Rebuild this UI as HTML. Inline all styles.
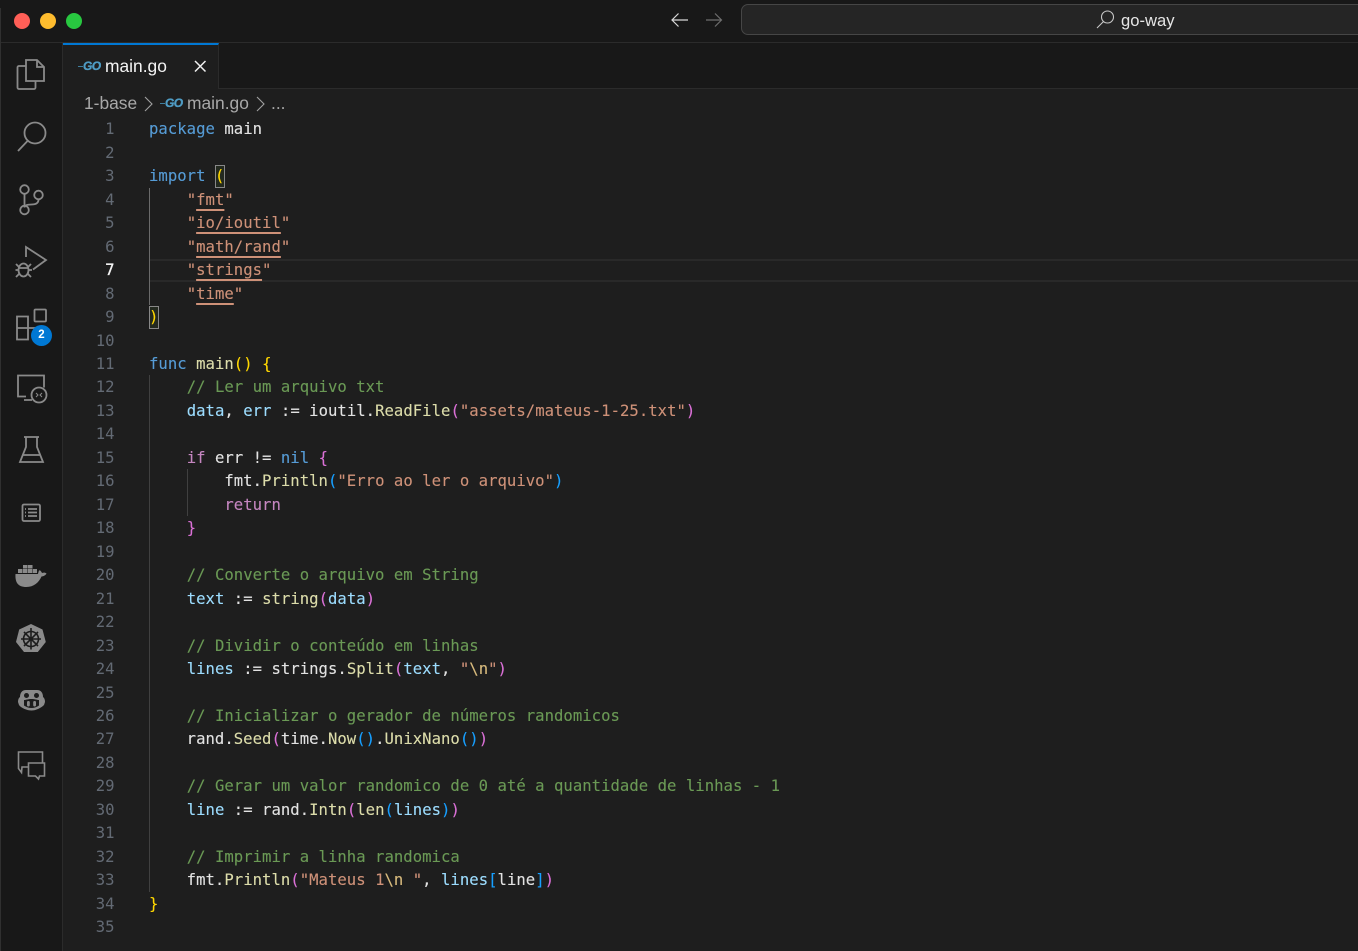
<!DOCTYPE html>
<html><head><meta charset="utf-8"><style>
html,body{margin:0;padding:0;background:#1e1e1e}
#r{position:relative;width:1358px;height:951px;overflow:hidden;background:#1e1e1e;font-family:"Liberation Sans",sans-serif}
.a{position:absolute}
#code,#nums{position:absolute;top:118.3px;margin:0;font:15.6px/23.47px "DejaVu Sans Mono","Liberation Mono",monospace;white-space:pre;color:#e2e2e2}
#code{left:149px;letter-spacing:.03px;-webkit-text-stroke:.12px}
#nums{left:76px;width:38.5px;text-align:right;color:#636a74}
#nums b{font-weight:normal;color:#f4f4f4;-webkit-text-stroke:.3px}
.k{color:#569cd6}.c{color:#c586c0}.s{color:#ce9178}.f{color:#dcdcaa}.v{color:#9cdcfe}.g{color:#6a9955}.y{color:#ffd700}.m{color:#da70d6}.b{color:#179fff}.e{color:#d7ba7d}
.u{text-decoration:underline;text-decoration-thickness:1.5px;text-underline-offset:3.5px;text-decoration-skip-ink:none}
.go{position:absolute;font:italic bold 12px/12px "Liberation Sans",sans-serif;color:#4f9cc4;letter-spacing:-.6px;-webkit-text-stroke:.35px #4f9cc4}
.go:before{content:"";position:absolute;left:-5px;top:6px;width:5px;height:1px;background:#3f7f9f}
</style></head><body><div id="r">
<!-- title bar -->
<div class="a" style="left:0;top:0;width:1358px;height:42px;background:#181818"></div>
<div class="a" style="left:0;top:42px;width:1358px;height:1px;background:#2b2b2b"></div>
<div class="a" style="left:14px;top:13px;width:16px;height:16px;border-radius:50%;background:#ff5f57"></div>
<div class="a" style="left:40px;top:13px;width:16px;height:16px;border-radius:50%;background:#febc2e"></div>
<div class="a" style="left:66px;top:13px;width:16px;height:16px;border-radius:50%;background:#28c840"></div>
<svg class="a" style="left:665px;top:8px" width="60" height="24" fill="none" stroke-width="1.2"><path d="M23 12H7M13.500 5.500L7 12l6.500 6.500" stroke="#d8d8d8"/><path d="M41 12h15.500M50 5.500l6.500 6.500-6.500 6.500" stroke="#6e6e6e"/></svg>
<div class="a" style="left:741px;top:4px;width:640px;height:29px;background:#252525;border:1px solid #464646;border-radius:7px"></div>
<svg class="a" style="left:1095px;top:9px" width="22" height="22" fill="none" stroke="#c8c8c8" stroke-width="1.1"><circle cx="12.500" cy="8" r="6"/><path d="M8.500 12.500L2 19"/></svg>
<div class="a" style="left:1121px;top:12px;font-size:16.600px;line-height:18px;color:#e6e6e6">go-way</div>
<!-- activity bar -->
<div class="a" style="left:0;top:43px;width:62px;height:908px;background:#181818;border-right:1px solid #2b2b2b"></div>
<div class="a" style="left:0;top:8px;width:1px;height:943px;background:#303030"></div>
<svg class="a" style="left:0;top:43px" width="62" height="760" fill="none" stroke="#8a8a8a" stroke-width="1.8" viewBox="0 43 62 760">
<path d="M26 72V60h11l7 7v14H26v-9M37 60v7h7"/><path d="M26 66h-7a1.500 1.500 0 0 0-1.500 1.500v20a1.500 1.500 0 0 0 1.500 1.500h15a1.500 1.500 0 0 0 1.500-1.500V81"/>
<circle cx="35" cy="133" r="10.500"/><path d="M27.500 141L18 151"/>
<circle cx="24.500" cy="189.500" r="4.300"/><circle cx="38.500" cy="195" r="4.300"/><circle cx="24.500" cy="210" r="4.300"/><path d="M24.500 194V205.500M38.500 199.500c0 4-3 5-7 5-3.500 0-7 .5-7 3"/>
<path d="M26 257v-10l20 13-13 9.500"/><ellipse cx="23.500" cy="270" rx="5" ry="6.500"/><path d="M19 268h9M16 264l3 3M31 264l-3 3M15.500 270h3.500M32 270h-3.500M16 277l3-3M31 277l-3-3"/>
<path d="M17 316.500h11v23H17zM17 328h22"/><rect x="34.500" y="309.500" width="11.500" height="12" rx="1"/>
<path d="M26 396.500h-8v-21h26v12M24 400h8"/><circle cx="39" cy="395" r="7.500"/><path d="M36 393l2 2-2 2M42 393l-2 2 2 2" stroke-width="1"/>
<path d="M24 437h15M26 437v10l-6 15h23l-6-15v-10M23 455h17"/>
<rect x="22.500" y="504.500" width="17.500" height="16.500" rx="1.500"/><path d="M28 509h9M28 512.500h9M28 516h9M25 509h1M25 512.500h1M25 516h1"/>
<path d="M20 752h22.500v11M28 767h-6l-.5 5.500-3-4V752h2" stroke-width="1.600"/><path d="M28.500 763h16v13h-5l-1 3-3-3h-7z" stroke-width="1.600"/>
</svg>
<svg class="a" style="left:0;top:43px" width="62" height="760" viewBox="0 43 62 760" fill="#8a8a8a">
<path d="M15.500 574H38c.5-2 1-4 1.500-3.500.8-.5 2 1.500 2.500 2.500 1.500-.5 3.500-.5 4.500.5-1 2-3 2.800-5 3-2.500 6-8 10.500-15 10.500-9 0-11.500-5-11-13z"/>
<path d="M18 569h4.500v4H18zM23 569h4.500v4H23zM28 569h4.500v4H28zM33 569h4v4h-4zM23 565h4.500v3.500H23zM28 565h4.500v3.500H28z"/>
<path d="M31 624l11.500 5.500 3.300 12.500-8 10H24l-8-10 3.200-12.500z"/>
<g fill="none" stroke="#1c1c1c" stroke-width="1.600"><circle cx="31" cy="639" r="7.500"/><path d="M31 628v21.500M21 639h20M24 632l14 14M38 632l-14 14"/></g>
<path d="M26 690h11c4 0 6 3 6 7 1.500 1 2 3 2 5l-1 3c-3 3-8 5.500-12.500 5.500S21 708 19 705l-1-3c0-2 .5-4 2-5 0-4 2-7 6-7z"/>
<g fill="#1c1c1c"><path d="M24 700c2 0 4-1 7.500-1s5.500 1 7.500 1v5.500c-2 1.500-5 2.500-7.500 2.500s-5.500-1-7.500-2.500z"/><circle cx="26.500" cy="695.500" r="2.500"/><circle cx="36.500" cy="695.500" r="2.500"/></g>
<rect x="27" y="701" width="2.800" height="5.500" rx="1.200"/><rect x="33.200" y="701" width="2.800" height="5.500" rx="1.200"/>
</svg>
<div class="a" style="left:31px;top:324.500px;width:21px;height:21px;border-radius:50%;background:#0078d4;color:#fff;font:bold 11.5px/21px 'Liberation Sans',sans-serif;text-align:center">2</div>
<!-- tabs -->
<div class="a" style="left:63px;top:43px;width:1295px;height:45px;background:#181818;border-bottom:1px solid #2b2b2b"></div>
<div class="a" style="left:63px;top:43px;width:155px;height:44px;background:#1e1e1e;border-top:2px solid #0078d4;border-right:1px solid #2b2b2b"></div>
<div class="go" style="left:83px;top:60px">GO</div>
<div class="a" style="left:105px;top:56px;font-size:17.400px;line-height:20px;color:#f4f4f4">main.go</div>
<svg class="a" style="left:193px;top:59px" width="14" height="14" stroke="#f0f0f0" stroke-width="1.500"><path d="M2 2l10.500 10.500M12.500 2L2 12.500"/></svg>
<!-- breadcrumb -->
<div class="a" style="left:84px;top:93px;font-size:17.400px;line-height:20px;color:#a8a8a8">1-base</div>
<svg class="a" style="left:142px;top:95px" width="14" height="18" fill="none" stroke="#a0a0a0" stroke-width="1.100"><path d="M3 2l7 7-7 7"/></svg>
<div class="go" style="left:165px;top:97px">GO</div>
<div class="a" style="left:187px;top:93px;font-size:17.400px;line-height:20px;color:#a8a8a8">main.go</div>
<svg class="a" style="left:254px;top:95px" width="14" height="18" fill="none" stroke="#a0a0a0" stroke-width="1.100"><path d="M3 2l7 7-7 7"/></svg>
<div class="a" style="left:271px;top:93px;font-size:17.400px;line-height:20px;color:#a8a8a8">...</div>
<!-- editor decorations -->
<div class="a" style="left:150px;top:258px;width:1208px;height:19px;border-top:2px solid #292929;border-bottom:2px solid #292929;margin-top:.5px"></div>
<div class="a" style="left:149px;top:188px;width:1px;height:117px;background:#6a6a6a"></div>
<div class="a" style="left:149px;top:375px;width:1px;height:517px;background:#404040"></div>
<div class="a" style="left:187px;top:469px;width:1px;height:47px;background:#404040"></div>
<div class="a" style="left:215px;top:165px;width:8px;height:21px;border:1px solid #888;background:#23291f"></div>
<div class="a" style="left:149px;top:306px;width:8px;height:21px;border:1px solid #888;background:#23291f"></div>
<pre id="nums">1
2
3
4
5
6
<b>7</b>
8
9
10
11
12
13
14
15
16
17
18
19
20
21
22
23
24
25
26
27
28
29
30
31
32
33
34
35</pre>
<pre id="code"><span class="k">package</span> main

<span class="k">import</span> <span class="y">(</span>
    <span class="s">"<span class="u">fmt</span>"</span>
    <span class="s">"<span class="u">io/ioutil</span>"</span>
    <span class="s">"<span class="u">math/rand</span>"</span>
    <span class="s">"<span class="u">strings</span>"</span>
    <span class="s">"<span class="u">time</span>"</span>
<span class="y">)</span>

<span class="k">func</span> <span class="f">main</span><span class="y">()</span> <span class="y">{</span>
    <span class="g">// Ler um arquivo txt</span>
    <span class="v">data</span>, <span class="v">err</span> := ioutil.<span class="f">ReadFile</span><span class="m">(</span><span class="s">"assets/mateus-1-25.txt"</span><span class="m">)</span>

    <span class="c">if</span> err != <span class="k">nil</span> <span class="m">{</span>
        fmt.<span class="f">Println</span><span class="b">(</span><span class="s">"Erro ao ler o arquivo"</span><span class="b">)</span>
        <span class="c">return</span>
    <span class="m">}</span>

    <span class="g">// Converte o arquivo em String</span>
    <span class="v">text</span> := <span class="f">string</span><span class="m">(</span><span class="v">data</span><span class="m">)</span>

    <span class="g">// Dividir o conteúdo em linhas</span>
    <span class="v">lines</span> := strings.<span class="f">Split</span><span class="m">(</span><span class="v">text</span>, <span class="s">"</span><span class="e">\n</span><span class="s">"</span><span class="m">)</span>

    <span class="g">// Inicializar o gerador de números randomicos</span>
    rand.<span class="f">Seed</span><span class="m">(</span>time.<span class="f">Now</span><span class="b">()</span>.<span class="f">UnixNano</span><span class="b">()</span><span class="m">)</span>

    <span class="g">// Gerar um valor randomico de 0 até a quantidade de linhas - 1</span>
    <span class="v">line</span> := rand.<span class="f">Intn</span><span class="m">(</span><span class="f">len</span><span class="b">(</span><span class="v">lines</span><span class="b">)</span><span class="m">)</span>

    <span class="g">// Imprimir a linha randomica</span>
    fmt.<span class="f">Println</span><span class="m">(</span><span class="s">"Mateus 1</span><span class="e">\n</span><span class="s"> "</span>, <span class="v">lines</span><span class="b">[</span>line<span class="b">]</span><span class="m">)</span>
<span class="y">}</span>
</pre>
</div></body></html>
